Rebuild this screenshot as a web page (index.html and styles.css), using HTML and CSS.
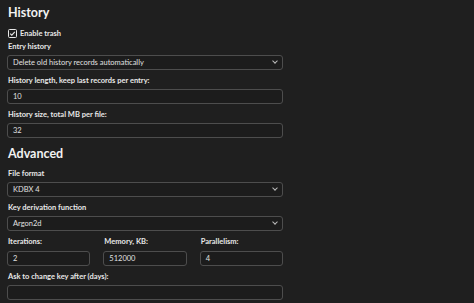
FILE: index.html
```html
<!DOCTYPE html>
<html>
<head>
    <title>Settings</title>
    <link rel="stylesheet" href="styles.css">
</head>
<body>
    <div class="settings">
        <h1>History</h1>
        <label class="check">
            <span class="box">
                <svg width="9" height="9" viewBox="0 0 9 9"><rect x="0.5" y="0.5" width="8" height="8" rx="1" fill="none" stroke="#e8e8e8"/><path d="M2.2 4.6 L3.8 6.1 L6.8 2.8" fill="none" stroke="#e8e8e8" stroke-width="1.1"/></svg>
            </span>
            Enable trash
        </label>

        <div class="label">Entry history</div>
        <div class="field select">Delete old history records automatically<span class="chev"></span></div>

        <div class="label">History length, keep last records per entry:</div>
        <div class="field">10</div>

        <div class="label">History size, total MB per file:</div>
        <div class="field">32</div>

        <h2>Advanced</h2>

        <div class="label">File format</div>
        <div class="field select">KDBX 4<span class="chev"></span></div>

        <div class="label">Key derivation function</div>
        <div class="field select">Argon2d<span class="chev"></span></div>

        <div class="row">
            <div class="col">
                <div class="label">Iterations:</div>
                <div class="field">2</div>
            </div>
            <div class="col">
                <div class="label">Memory, KB:</div>
                <div class="field">512000</div>
            </div>
            <div class="col">
                <div class="label">Parallelism:</div>
                <div class="field">4</div>
            </div>
        </div>

        <div class="label">Ask to change key after (days):</div>
        <div class="field"></div>
    </div>
</body>
</html>
```

FILE: styles.css
```css
body {
    margin: 0;
    padding: 0;
    background-color: #1f1f1f;
    color: #e8e8e8;
    font-family: Lato, 'Noto Sans', sans-serif;
    font-size: 7.5px;
}
.settings {
    width: 276px;
    padding: 3px 0 0 7px;
}
h1, h2 {
    margin: 0;
    font-size: 12.5px;
    line-height: 20px;
    font-weight: 700;
    color: #f2f2f2;
    padding-left: 1px;
}
h2 {
    margin-top: 6px;
    margin-bottom: 4px;
}
.check {
    display: flex;
    align-items: center;
    height: 12px;
    margin: 4px 0 2px 1px;
    font-weight: 700;
}
.box {
    display: flex;
    margin-right: 3px;
}
.label {
    height: 12px;
    line-height: 12px;
    font-weight: 700;
    margin-bottom: 2px;
    padding-left: 1px;
    white-space: nowrap;
}
.field {
    position: relative;
    box-sizing: border-box;
    height: 15px;
    line-height: 13px;
    border: 1px solid #4d4d4d;
    border-radius: 3px;
    background-color: #1c1c1c;
    padding: 0 5px;
    margin-bottom: 5px;
    color: #e0e0e0;
}
.chev {
    position: absolute;
    right: 5px;
    top: 3px;
    width: 3px;
    height: 3px;
    border-right: 1px solid #bbbbbb;
    border-bottom: 1px solid #bbbbbb;
    transform: rotate(45deg);
}
.row {
    display: flex;
    gap: 13px;
    margin-top: 1px;
}
.col {
    flex: 1;
}
.row .label {
    margin-bottom: 3px;
}
```
